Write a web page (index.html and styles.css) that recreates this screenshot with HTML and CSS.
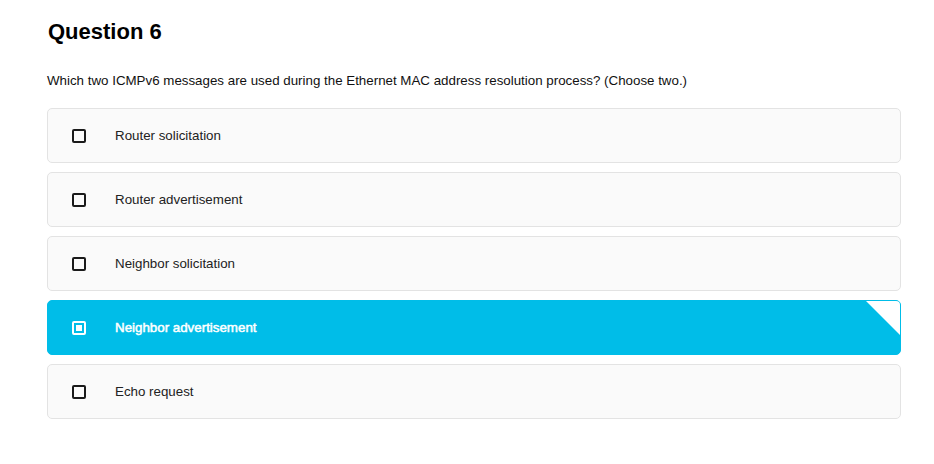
FILE: index.html
```html
<!DOCTYPE html>
<html>
<head>
<meta charset="utf-8">
<link rel="stylesheet" href="styles.css">
</head>
<body>
<main class="quiz">
  <h1 class="title">Question 6</h1>
  <p class="prompt">Which two ICMPv6 messages are used during the Ethernet MAC address resolution process? (Choose two.)</p>
  <ul class="options">
    <li class="option"><span class="box"></span><span class="label">Router solicitation</span></li>
    <li class="option"><span class="box"></span><span class="label">Router advertisement</span></li>
    <li class="option"><span class="box"></span><span class="label">Neighbor solicitation</span></li>
    <li class="option selected"><span class="box"></span><span class="label">Neighbor advertisement</span><span class="corner"></span></li>
    <li class="option"><span class="box"></span><span class="label">Echo request</span></li>
  </ul>
</main>
</body>
</html>
```

FILE: styles.css
```css
html, body {
  margin: 0;
  padding: 0;
  background: #ffffff;
}
body {
  font-family: "Liberation Sans", Arial, sans-serif;
  color: #111;
}
.quiz {
  width: 854px;
  padding: 17px 0 0 47px;
}
.title {
  margin: 0;
  font-size: 22px;
  line-height: 30px;
  font-weight: bold;
  color: #000;
  padding-left: 1px;
}
.prompt {
  margin: 26px 0 0 0;
  font-size: 13.33px;
  line-height: 16px;
  color: #111;
}
.options {
  list-style: none;
  margin: 19px 0 0 0;
  padding: 0;
  display: flex;
  flex-direction: column;
  gap: 9px;
}
.option {
  position: relative;
  overflow: hidden;
  box-sizing: border-box;
  height: 55px;
  display: flex;
  align-items: center;
  padding-left: 24px;
  background: #fafafa;
  border: 1px solid #e3e3e3;
  border-radius: 5px;
  font-size: 13.33px;
  color: #222;
}
.option.selected {
  background: #00bde8;
  border-color: #00bde8;
  color: #fff;
}
.selected .label {
  -webkit-text-stroke: 0.5px #fff;
}
.box {
  width: 14px;
  height: 14px;
  box-sizing: border-box;
  border: 2px solid #1a1a1a;
  border-radius: 2px;
  margin-right: 29px;
  flex: none;
  display: flex;
  align-items: center;
  justify-content: center;
}
.selected .box {
  border-color: #fff;
}
.selected .box::after {
  content: "";
  width: 6px;
  height: 6px;
  background: #fff;
}
.corner {
  position: absolute;
  top: 0;
  right: 0;
  width: 34px;
  height: 34px;
  background: #fff;
  clip-path: polygon(0 0, 100% 0, 100% 100%);
}
```
